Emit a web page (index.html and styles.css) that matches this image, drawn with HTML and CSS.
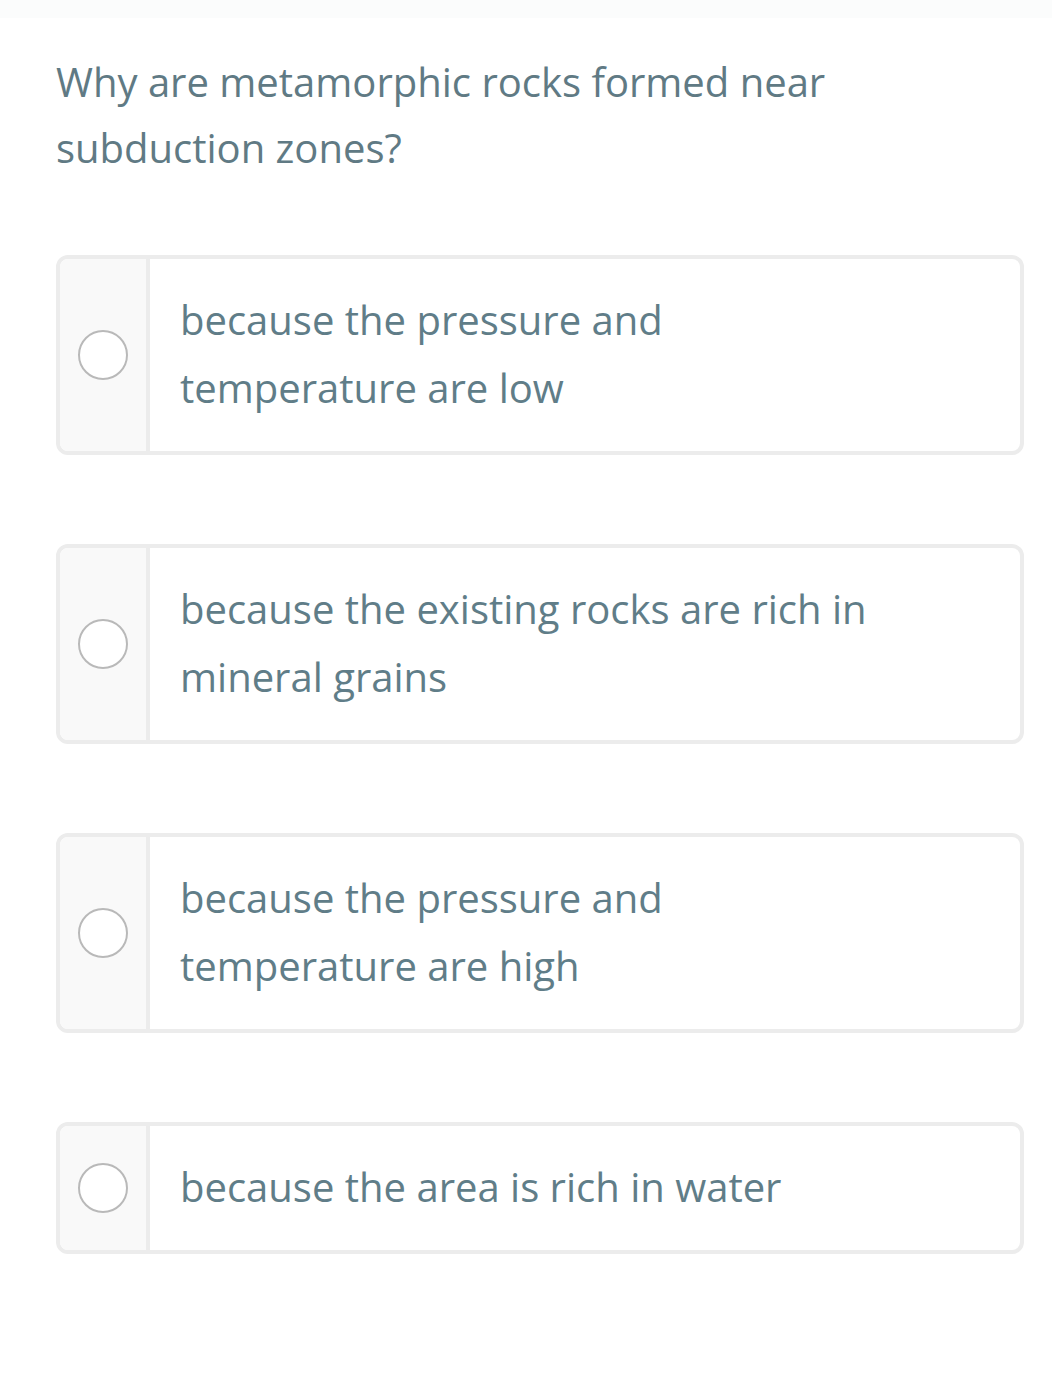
FILE: index.html
```html
<!DOCTYPE html>
<html lang="en">
<head>
  <meta charset="UTF-8">
  <meta name="viewport" content="width=device-width, initial-scale=1.0">
  <title>Quiz</title>
  <link rel="stylesheet" href="styles.css">
</head>
<body>
  <div class="top-bar"></div>
  <div class="quiz">
    <h2 class="question">Why are metamorphic rocks formed near subduction zones?</h2>

    <div class="options">
      <label class="option">
        <div class="option-radio"><span class="radio"></span></div>
        <div class="option-text">because the pressure and<br>temperature are low</div>
      </label>

      <label class="option">
        <div class="option-radio"><span class="radio"></span></div>
        <div class="option-text">because the existing rocks are rich in<br>mineral grains</div>
      </label>

      <label class="option">
        <div class="option-radio"><span class="radio"></span></div>
        <div class="option-text">because the pressure and<br>temperature are high</div>
      </label>

      <label class="option">
        <div class="option-radio"><span class="radio"></span></div>
        <div class="option-text">because the area is rich in water</div>
      </label>
    </div>
  </div>
</body>
</html>
```

FILE: styles.css
```css
body {
  margin: 0;
  background: #ffffff;
  font-family: "Open Sans", "Noto Sans", sans-serif;
  color: #607d88;
}
.top-bar {
  height: 18px;
  background: #fbfcfc;
}
.quiz {
  padding: 31px 28px 0 56px;
}
.question {
  margin: 0 0 74px 0;
  font-size: 40px;
  font-weight: normal;
  line-height: 66px;
  max-width: 800px;
  color: #607a84;
}
.options {
  display: flex;
  flex-direction: column;
  gap: 89px;
}
.option {
  display: flex;
  border: 4px solid #ececec;
  border-radius: 12px;
  overflow: hidden;
  background: #fff;
}
.option-radio {
  width: 86px;
  flex-shrink: 0;
  background: #f9f9f9;
  border-right: 4px solid #ececec;
  display: flex;
  align-items: center;
  justify-content: center;
}
.radio {
  width: 46px;
  height: 46px;
  border: 2px solid #b9b9b9;
  border-radius: 50%;
  background: #fff;
}
.option-text {
  padding: 27px 30px 29px;
  font-size: 40px;
  line-height: 68px;
}
```
